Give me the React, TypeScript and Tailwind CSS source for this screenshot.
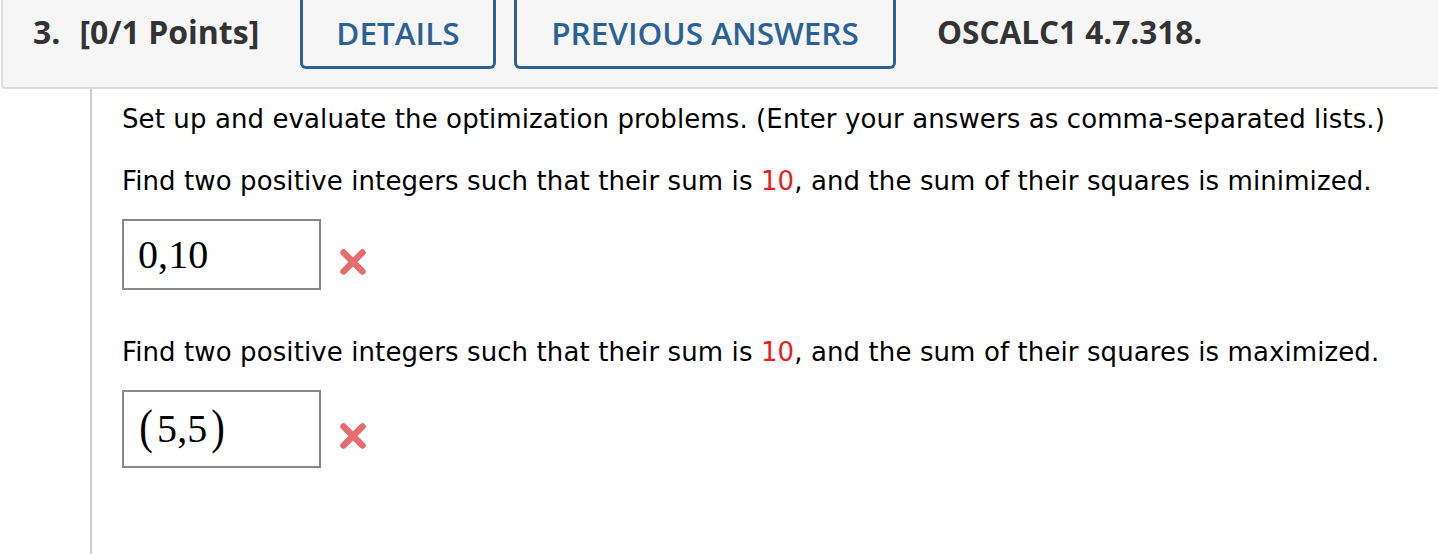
import React from 'react';

const WrongMark = () => (
  <svg width="28" height="28" viewBox="0 0 28 28" className="shrink-0 translate-y-[7px]">
    <path
      d="M4.5 4.5 L23.5 23.5 M23.5 4.5 L4.5 23.5"
      stroke="#e55b5f"
      strokeWidth="6.5"
      strokeLinecap="round"
      fill="none"
      opacity="0.9"
    />
  </svg>
);

const AnswerBox = ({ children, height }: { children: React.ReactNode; height: string }) => (
  <div className="flex items-center gap-[18px]">
    <div
      className={`w-[199px] ${height} border-2 border-[#888888] bg-white flex items-center pl-[14px] text-[40px] leading-none text-black`}
      style={{ fontFamily: '"Liberation Serif", "Times New Roman", serif' }}
    >
      {children}
    </div>
    <WrongMark />
  </div>
);

export default function App() {
  const btn =
    'h-[69px] border-x-[3px] border-b-[3px] border-[#2b6295] rounded-b-[6px] flex items-center justify-center text-[#2b6295] font-semibold text-[31.5px]';

  return (
    <div className="w-[1438px] h-[554px] bg-white overflow-hidden">
      {/* header */}
      <div
        className="ml-[1px] h-[89px] bg-[#f6f6f6] border-l-2 border-b-2 border-[#dddddd] rounded-bl-[4px] flex items-start"
        style={{ fontFamily: '"Open Sans", sans-serif' }}
      >
        <div className="w-[297px] h-[63px] flex items-center pl-[30px] text-[#333333] font-bold text-[32px]">
          <span>3.</span>
          <span className="ml-[19px]">[0/1 Points]</span>
        </div>
        <div className={`${btn} w-[196px]`}>DETAILS</div>
        <div className={`${btn} w-[382px] ml-[18px]`}>PREVIOUS ANSWERS</div>
        <div className="h-[63px] flex items-center ml-[41px] text-[#333333] font-bold text-[31.5px]">
          OSCALC1 4.7.318.
        </div>
      </div>

      {/* body */}
      <div className="ml-[90px] h-[465px] border-l-2 border-[#cccccc] pl-[30px]">
        <div
          className="text-[26px] tracking-[0.1px] text-black"
          style={{ fontFamily: '"DejaVu Sans", Verdana, sans-serif' }}
        >
          <p className="pt-[15px] leading-[30px]">
            Set up and evaluate the optimization problems. (Enter your answers as comma-separated lists.)
          </p>
          <p className="mt-[32px] leading-[30px]">
            Find two positive integers such that their sum is <span className="text-[#e8201a]">10</span>, and
            the sum of their squares is minimized.
          </p>
          <div className="mt-[23px]">
            <AnswerBox height="h-[71px]">0,10</AnswerBox>
          </div>
          <p className="mt-[47px] leading-[30px]">
            Find two positive integers such that their sum is <span className="text-[#e8201a]">10</span>, and
            the sum of their squares is maximized.
          </p>
          <div className="mt-[23px]">
            <AnswerBox height="h-[78px]">
              <span className="text-[48px] font-light relative top-[-2px] scale-x-[0.85] inline-block">(</span>
              <span className="mx-[3px]">5,5</span>
              <span className="text-[48px] font-light relative top-[-2px] scale-x-[0.85] inline-block">)</span>
            </AnswerBox>
          </div>
        </div>
      </div>
    </div>
  );
}
